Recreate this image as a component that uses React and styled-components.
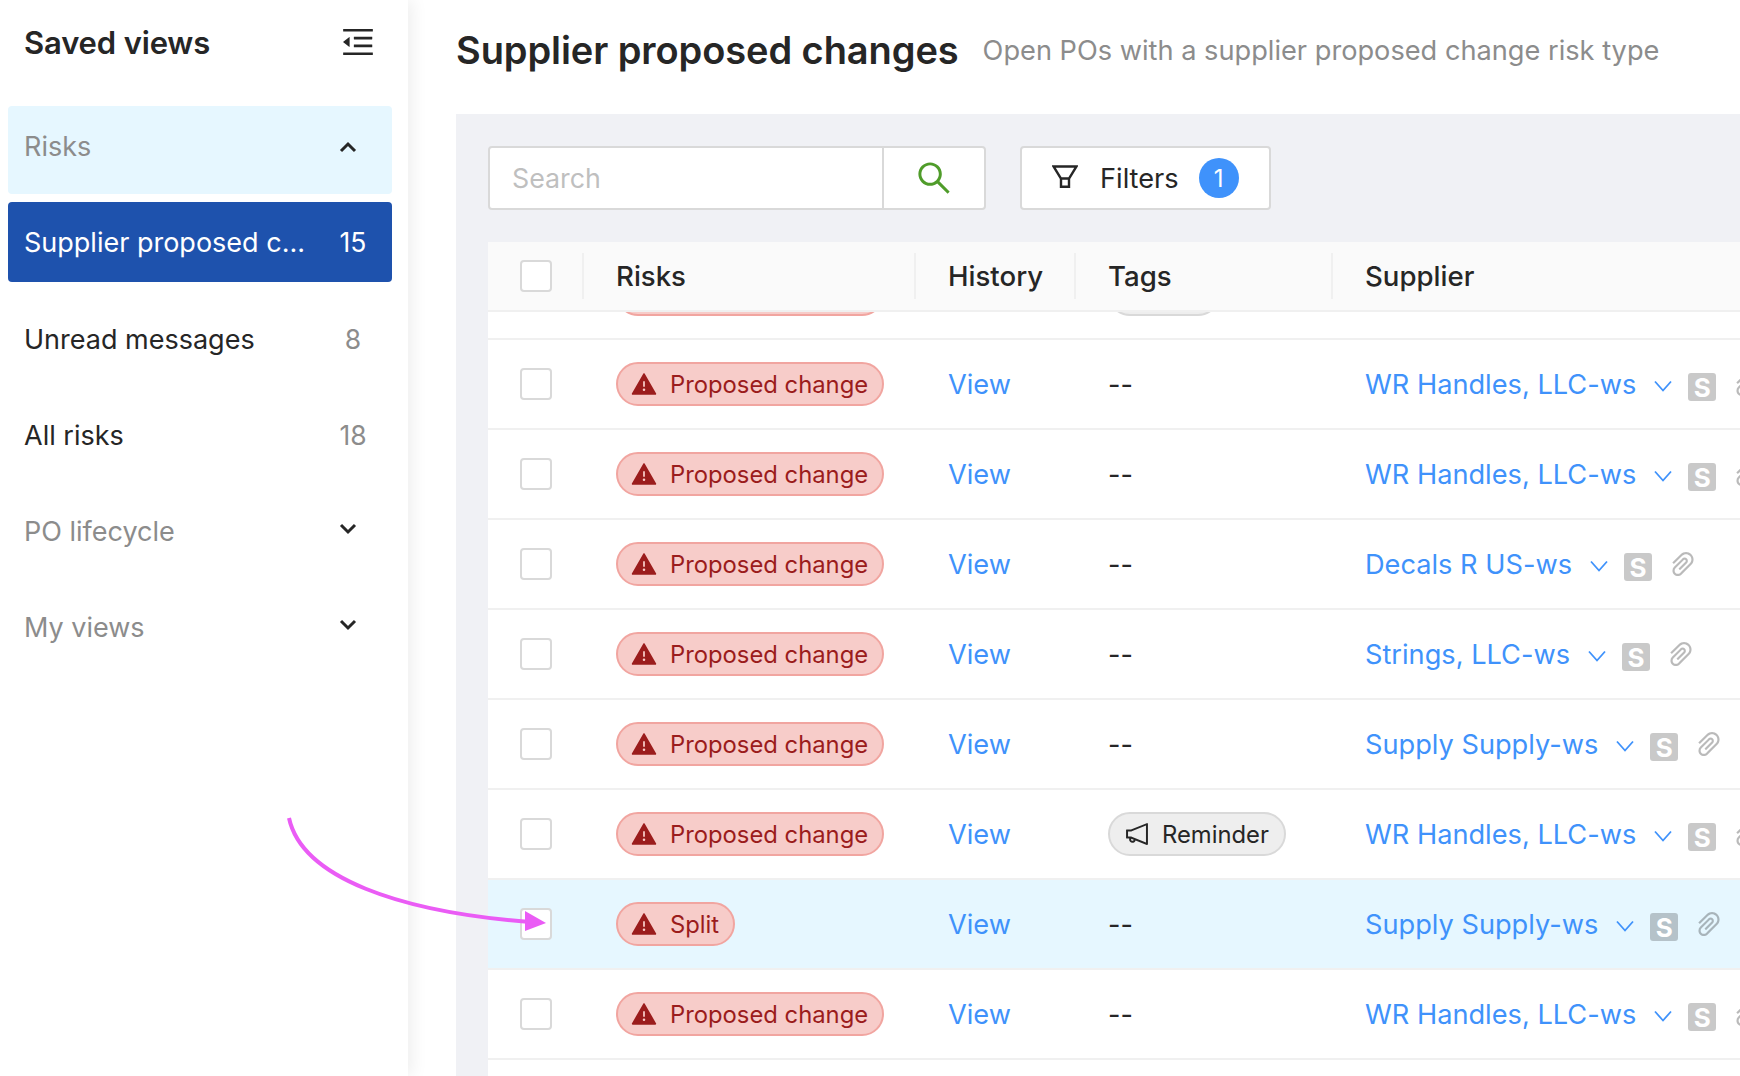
import React from "react";
import styled, { createGlobalStyle } from "styled-components";
import {
  AiOutlineMenuFold,
  AiOutlineSearch,
  AiFillWarning,
  AiOutlineNotification,
  AiOutlinePaperClip,
} from "react-icons/ai";

const Global = createGlobalStyle`
  html, body { margin: 0; padding: 0; height: 100%; background: #fff; overflow: hidden; }
  * { box-sizing: border-box; }
  body { font-family: Inter, "Liberation Sans", sans-serif; color: #262626; }
`;

const Page = styled.div`
  position: relative;
  display: flex;
  width: 1740px;
  height: 1076px;
  overflow: hidden;
  background: #fff;
`;

const Sidebar = styled.aside`
  flex: 0 0 408px;
  position: relative;
  z-index: 2;
  background: #fff;
  padding: 0 16px 0 8px;
  box-shadow: 4px 0 16px rgba(0, 0, 0, 0.07);
`;

const SideHead = styled.div`
  height: 106px;
  padding: 0 15px 22px 16px;
  display: flex;
  align-items: center;
  justify-content: space-between;
`;

const SideTitle = styled.h2`
  margin: 0;
  font-size: 31px;
  font-weight: 600;
  letter-spacing: -0.15px;
  color: #262626;
`;

const FoldIcon = styled(AiOutlineMenuFold)`
  font-size: 38px;
  color: #262626;
`;

const GroupRow = styled.div`
  height: ${(p) => (p.$open ? 88 : 96)}px;
  margin-bottom: ${(p) => (p.$open ? 8 : 0)}px;
  padding: ${(p) => (p.$open ? "0 35px 7px 16px" : "2px 35px 0 16px")};
  display: flex;
  align-items: center;
  justify-content: space-between;
  border-radius: 4px;
  background: ${(p) => (p.$open ? "#e6f7ff" : "transparent")};
  color: #8c8c8c;
  font-size: 27px;
`;

const ItemRow = styled.div`
  height: ${(p) => (p.$active ? 80 : 96)}px;
  margin-bottom: ${(p) => (p.$active ? 8 : 0)}px;
  padding: ${(p) => (p.$active ? "0 23px 0 16px" : "2px 23px 0 16px")};
  display: flex;
  align-items: center;
  justify-content: space-between;
  border-radius: 4px;
  background: ${(p) => (p.$active ? "#1e52ad" : "transparent")};
  color: ${(p) => (p.$active ? "#fff" : "#262626")};
  font-size: 27px;
`;

const Count = styled.span`
  width: 32px;
  text-align: center;
  font-size: 26.5px;
  color: ${(p) => (p.$active ? "#fff" : "#8c8c8c")};
`;

const Caret = styled.svg`
  width: 18px;
  height: 12px;
  margin-bottom: ${(p) => (p.$lift ? 4 : 0)}px;
  fill: none;
  stroke: #262626;
  stroke-width: 3;
`;

const Main = styled.main`
  flex: 1;
  min-width: 0;
  display: flex;
  flex-direction: column;
  padding-left: 48px;
`;

const TitleBar = styled.header`
  height: 114px;
  padding-bottom: 14px;
  display: flex;
  align-items: center;
  gap: 24px;
`;

const PageTitle = styled.h1`
  margin: 0;
  font-size: 38px;
  font-weight: 600;
  letter-spacing: -0.08px;
  color: #262626;
  white-space: nowrap;
`;

const Subtitle = styled.span`
  font-size: 27.2px;
  color: #8c8c8c;
  white-space: nowrap;
`;

const Panel = styled.section`
  flex: 1;
  min-height: 0;
  background: #f0f1f5;
  padding: 32px 0 0 32px;
  display: flex;
  flex-direction: column;
`;

const Toolbar = styled.div`
  display: flex;
  gap: 34px;
  height: 64px;
  margin-bottom: 32px;
`;

const SearchBox = styled.div`
  width: 498px;
  display: flex;
  background: #fff;
  border: 2px solid #d9d9d9;
  border-radius: 4px;
`;

const Placeholder = styled.div`
  flex: 1;
  padding-left: 22px;
  display: flex;
  align-items: center;
  font-size: 26.8px;
  color: #bfbfbf;
`;

const SearchBtn = styled.div`
  width: 102px;
  border-left: 2px solid #d9d9d9;
  display: flex;
  align-items: center;
  justify-content: center;
  font-size: 40px;
  color: #4f9c2a;
`;

const FilterBtn = styled.div`
  width: 251px;
  display: flex;
  align-items: center;
  padding-left: 30px;
  background: #fff;
  border: 2px solid #d9d9d9;
  border-radius: 4px;
  font-size: 27.2px;
  color: #262626;
`;

const FunnelIcon = styled.svg`
  width: 26px;
  height: 23px;
  margin: 0 22px 4px 0;
  fill: none;
  stroke: #262626;
  stroke-width: 2.4;
`;

const Badge = styled.span`
  width: 40px;
  height: 40px;
  margin-left: 20px;
  border-radius: 50%;
  background: #3f92fb;
  color: #fff;
  font-size: 24px;
  display: flex;
  align-items: center;
  justify-content: center;
`;

const TableWrap = styled.div`
  flex: 1;
  min-height: 0;
  background: #fff;
  display: flex;
  flex-direction: column;
`;

const cols = "96px 332px 160px 257px 1fr";

const HeadRow = styled.div`
  flex: 0 0 70px;
  display: grid;
  grid-template-columns: ${cols};
  align-items: center;
  background: #fafafa;
  border-bottom: 2px solid #f0f0f0;
`;

const HeadCell = styled.div`
  height: 46px;
  padding-left: 32px;
  display: flex;
  align-items: center;
  font-size: 27.6px;
  font-weight: 500;
  color: #262626;
  border-right: ${(p) => (p.$last ? "none" : "2px solid #f0f0f0")};
`;

const CheckCell = styled.div`
  height: 46px;
  padding-left: 32px;
  display: flex;
  align-items: center;
  border-right: ${(p) => (p.$head ? "2px solid #f0f0f0" : "none")};
`;

const Check = styled.span`
  width: 32px;
  height: 32px;
  border: 2px solid #d9d9d9;
  border-radius: 4px;
  background: #fff;
`;

const Body = styled.div`
  flex: 1;
  min-height: 0;
  overflow: hidden;
`;

const PeekRow = styled.div`
  height: 28px;
  overflow: hidden;
  display: grid;
  grid-template-columns: ${cols};
  border-bottom: 2px solid #f0f0f0;
`;

const PeekCell = styled.div`
  padding-left: 32px;
`;

const PeekPill = styled.div`
  width: ${(p) => p.$w}px;
  height: 44px;
  margin-top: -40px;
  border-radius: 22px;
  background: ${(p) => (p.$tag ? "#eeeeee" : "#f7ccc9")};
  border: 2px solid ${(p) => (p.$tag ? "#d9d9d9" : "#f1a5a0")};
`;

const Row = styled.div`
  height: 90px;
  display: grid;
  grid-template-columns: ${cols};
  align-items: center;
  border-bottom: 2px solid #f0f0f0;
  background: ${(p) => (p.$hi ? "#e6f7ff" : "#fff")};
`;

const Cell = styled.div`
  padding-left: 32px;
  display: flex;
  align-items: center;
  white-space: nowrap;
`;

const RiskPill = styled.span`
  height: 44px;
  padding: 0 14px 0 12px;
  display: inline-flex;
  align-items: center;
  gap: 12px;
  border-radius: 22px;
  background: #f7ccc9;
  border: 2px solid #f1a5a0;
  color: #9b1c1c;
  font-size: 23.8px;
  svg { font-size: 28px; }
`;

const TagPill = styled.span`
  height: 44px;
  padding: 0 15px 0 13px;
  display: inline-flex;
  align-items: center;
  gap: 11px;
  border-radius: 22px;
  background: #eeeeee;
  border: 2px solid #d9d9d9;
  color: #262626;
  font-size: 23.8px;
  svg { font-size: 28px; }
`;

const Dash = styled.span`
  color: #262626;
  font-size: 27px;
`;

const LinkText = styled.span`
  color: #3f92fb;
  font-size: 27.2px;
`;

const SupplierCaret = styled.svg`
  width: 18px;
  height: 12px;
  margin: 4px 0 0 18px;
  fill: none;
  stroke: #3f92fb;
  stroke-width: 1.8;
`;

const SBadge = styled.span`
  width: 28px;
  height: 28px;
  margin: 6px 0 0 16px;
  border-radius: 3px;
  background: rgba(0, 0, 0, 0.21);
  color: #fff;
  font-size: 26px;
  font-weight: 700;
  display: flex;
  align-items: center;
  justify-content: center;
`;

const Clip = styled(AiOutlinePaperClip)`
  font-size: 32px;
  margin-left: 15px;
  color: rgba(0, 0, 0, 0.27);
`;

const ArrowOverlay = styled.svg`
  position: absolute;
  left: 285px;
  top: 815px;
  width: 265px;
  height: 120px;
  z-index: 5;
  pointer-events: none;
`;

const rows = [
  { risk: "Proposed change", supplier: "WR Handles, LLC-ws" },
  { risk: "Proposed change", supplier: "WR Handles, LLC-ws" },
  { risk: "Proposed change", supplier: "Decals R US-ws" },
  { risk: "Proposed change", supplier: "Strings, LLC-ws" },
  { risk: "Proposed change", supplier: "Supply Supply-ws" },
  { risk: "Proposed change", tag: "Reminder", supplier: "WR Handles, LLC-ws" },
  { risk: "Split", supplier: "Supply Supply-ws", hi: true },
  { risk: "Proposed change", supplier: "WR Handles, LLC-ws" },
];

const Up = () => (
  <Caret viewBox="0 0 18 12"><polyline points="2,10 9,3 16,10" /></Caret>
);
const Down = () => (
  <Caret $lift viewBox="0 0 18 12"><polyline points="2,2 9,9 16,2" /></Caret>
);

export default function App() {
  return (
    <Page>
      <Global />
      <Sidebar>
        <SideHead>
          <SideTitle>Saved views</SideTitle>
          <FoldIcon />
        </SideHead>
        <GroupRow $open>Risks<Up /></GroupRow>
        <ItemRow $active>
          Supplier proposed c...
          <Count $active>15</Count>
        </ItemRow>
        <ItemRow>Unread messages<Count>8</Count></ItemRow>
        <ItemRow>All risks<Count>18</Count></ItemRow>
        <GroupRow>PO lifecycle<Down /></GroupRow>
        <GroupRow>My views<Down /></GroupRow>
      </Sidebar>
      <Main>
        <TitleBar>
          <PageTitle>Supplier proposed changes</PageTitle>
          <Subtitle>Open POs with a supplier proposed change risk type</Subtitle>
        </TitleBar>
        <Panel>
          <Toolbar>
            <SearchBox>
              <Placeholder>Search</Placeholder>
              <SearchBtn><AiOutlineSearch /></SearchBtn>
            </SearchBox>
            <FilterBtn>
              <FunnelIcon viewBox="0 0 26 23">
                <path d="M1.5 1.5H24.5L17 13.5V21.8H9V13.5ZM9 13.5H17" />
              </FunnelIcon>
              Filters
              <Badge>1</Badge>
            </FilterBtn>
          </Toolbar>
          <TableWrap>
            <HeadRow>
              <CheckCell $head><Check /></CheckCell>
              <HeadCell>Risks</HeadCell>
              <HeadCell>History</HeadCell>
              <HeadCell>Tags</HeadCell>
              <HeadCell $last>Supplier</HeadCell>
            </HeadRow>
            <Body>
              <PeekRow>
                <span />
                <PeekCell><PeekPill $w={268} /></PeekCell>
                <span />
                <PeekCell><PeekPill $tag $w={112} /></PeekCell>
              </PeekRow>
              {rows.map((r, i) => (
                <Row key={i} $hi={r.hi}>
                  <CheckCell><Check /></CheckCell>
                  <Cell>
                    <RiskPill><AiFillWarning />{r.risk}</RiskPill>
                  </Cell>
                  <Cell><LinkText>View</LinkText></Cell>
                  <Cell>
                    {r.tag ? (
                      <TagPill><AiOutlineNotification />{r.tag}</TagPill>
                    ) : (
                      <Dash>--</Dash>
                    )}
                  </Cell>
                  <Cell>
                    <LinkText>{r.supplier}</LinkText>
                    <SupplierCaret viewBox="0 0 18 12"><polyline points="1,1.5 9,10.5 17,1.5" /></SupplierCaret>
                    <SBadge>S</SBadge>
                    <Clip />
                  </Cell>
                </Row>
              ))}
            </Body>
          </TableWrap>
        </Panel>
      </Main>
      <ArrowOverlay viewBox="285 815 265 120">
        <path d="M289 818 C302 878 400 912 530 922" fill="none" stroke="#ea5cf5" strokeWidth="4" />
        <polygon points="525,911 546,923 525,931" fill="#ea5cf5" />
      </ArrowOverlay>
    </Page>
  );
}
